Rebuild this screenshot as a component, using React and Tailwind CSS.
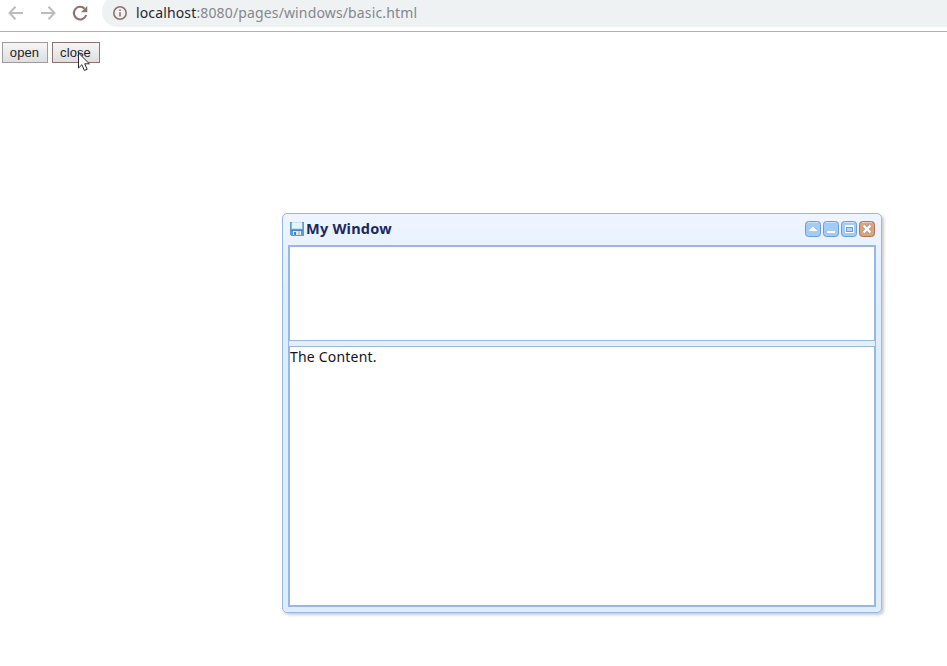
import React from "react";

const BrowserBar = () => (
  <div className="flex h-8 items-start border-b border-[#b0b0b0] bg-white">
    <svg className="h-[27px] w-[102px] shrink-0" viewBox="0 0 102 27" fill="none">
      <path d="M23 13H10M15.5 6.8 9.5 13l6 6.2" stroke="#b9bcc2" strokeWidth="2" />
      <path d="M41 13h13M48.500 6.800l6 6.200-6 6.200" stroke="#b9bcc2" strokeWidth="2" />
      <path d="M84.700 8.700A6.300 6.300 0 1 0 86.200 15" stroke="#8f7270" strokeWidth="2.100" />
      <path d="M87.300 6v6.300H81z" fill="#8f7270" />
    </svg>
    <div className="-mt-1 flex h-[31px] flex-1 items-center rounded-l-full bg-[#eef2f3] pt-[3px] pl-[11px]">
      <svg className="h-[14px] w-[14px] shrink-0" viewBox="0 0 14 14" fill="none">
        <circle cx="7" cy="7" r="6.200" stroke="#8f7270" strokeWidth="1.600" />
        <path d="M7 6.200v4.300M7 3.400v1.600" stroke="#8f7270" strokeWidth="1.600" />
      </svg>
      <span className="-mt-px ml-[9px] whitespace-nowrap text-[14px] leading-5 tracking-[0.14px] text-[#85868e]">
        <span className="text-[#29252c]">localhost</span>
        :8080/pages/windows/basic.html
      </span>
    </div>
  </div>
);

const Cursor = () => (
  <svg className="absolute top-[9px] left-[25px] h-[20px] w-[13px]" viewBox="0 0 13 20">
    <path
      d="M.5 1v15l3.400-3.300 2.500 5.800 2.800-1.200-2.500-5.500h4.700z"
      fill="#fff"
      stroke="#30243c"
    />
  </svg>
);

const SaveIcon = () => (
  <svg className="h-4 w-4" viewBox="0 0 16 16" shapeRendering="crispEdges">
    <path d="M2 1h14v14H3l-1-1z" fill="#5b9bd8" />
    <path d="M3 2h1v6H3zM14 2h1v6h-1z" fill="#82b5e4" />
    <path d="M4 1h10v7H4z" fill="#c9e2ee" />
    <path d="M4 2h10v5H4z" fill="#e6f4f6" />
    <path d="M3 9h12v1H3z" fill="#4289cf" />
    <path d="M5 10h8v4H5z" fill="#dfe6ec" />
    <path d="M6 11h2v3H6z" fill="#4f7fb0" />
    <path d="M10 10h2v4h-2z" fill="#c3ccd4" />
  </svg>
);

const tools = [
  {
    name: "collapse",
    border: "#6a9edb",
    fill: "#a3cbf5",
    glyph: <path d="M8 6h1v1h1v1h1v1h1v1H4V9h1V8h1V7h1V6z" fill="#fff" />,
  },
  {
    name: "minimize",
    border: "#6a9edb",
    fill: "#a3cbf5",
    glyph: <path d="M4 10h8v2H4z" fill="#fff" />,
  },
  {
    name: "maximize",
    border: "#6a9edb",
    fill: "#a3cbf5",
    glyph: (
      <>
        <path d="M4 4h9v8H4z" fill="#fff" />
        <path d="M5 6h7v5H5z" fill="#6a9edb" />
        <path d="M6 7h5v3H6z" fill="#b5d5f7" />
      </>
    ),
  },
  {
    name: "close",
    border: "#ad7659",
    fill: "#dba27e",
    glyph: (
      <>
        <path d="M4.500 4.500l7 7m0-7l-7 7" stroke="#a97457" strokeWidth="3.800" />
        <path d="M4.500 4.500l7 7m0-7l-7 7" stroke="#fff" strokeWidth="2.500" />
      </>
    ),
  },
];

const Window = () => (
  <div className="absolute top-[213px] left-[282px] flex h-[400px] w-[600px] flex-col rounded-[5px] border border-[#95b8e7] bg-linear-to-b from-[#eff5ff] to-[#e0ecff] to-20% px-[5px] pb-[5px] shadow-[2px_2px_3px_#cccccc]">
    <div className="flex h-[31px] shrink-0 items-center pr-px pb-px">
      <SaveIcon />
      <span className="-mt-[2px] ml-[2px] flex-1 text-[14.500px] leading-5 font-bold tracking-[0.22px] text-[#1b2a5e]">
        My Window
      </span>
      <div className="flex gap-[2px]">
        {tools.map((tool) => (
          <svg key={tool.name} className="h-4 w-4" viewBox="0 0 16 16">
            <rect x=".5" y=".5" width="15" height="15" rx="3" fill={tool.fill} stroke={tool.border} />
            <path d="M3 1.500h10" stroke="#fff" strokeOpacity=".4" />
            {tool.glyph}
          </svg>
        ))}
      </div>
    </div>
    <div className="flex flex-1 flex-col gap-[5px] border border-[#95b8e7] bg-[#e6eef8]">
      <div className="h-[95px] border border-[#95b8e7] bg-white" />
      <div className="flex-1 border border-[#95b8e7] bg-white text-[14px] leading-5 tracking-[0.2px] text-[#16121c]">
        The Content.
      </div>
    </div>
  </div>
);

export default function App() {
  return (
    <div className="relative h-[666px] w-[947px] overflow-hidden bg-white font-['Noto_Sans',sans-serif]">
      <BrowserBar />
      <div className="flex gap-1 px-[2px] pt-[10px] font-['Liberation_Sans',sans-serif] text-[13px]">
        <button className="h-[21px] w-[46px] border border-[#a09a9e] bg-linear-to-b from-[#f6f6f6] to-[#dedede] pr-px leading-[19px] tracking-[0.1px] text-[#1c1a26]">
          open
        </button>
        <button className="relative h-[21px] w-12 border border-[#8f7270] bg-linear-to-b from-[#f6f6f6] to-[#dedede] pr-px leading-[19px] tracking-[0.1px] text-[#1c1a26]">
          close
          <Cursor />
        </button>
      </div>
      <Window />
    </div>
  );
}
